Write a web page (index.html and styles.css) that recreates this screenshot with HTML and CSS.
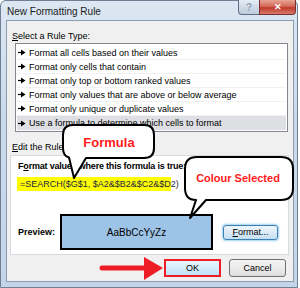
FILE: index.html
```html
<!DOCTYPE html>
<html>
<head>
<meta charset="utf-8">
<link rel="stylesheet" href="styles.css">
</head>
<body>
<div class="window">
  <div class="titlebar">
    <span class="title">New Formatting Rule</span>
    <div class="caption">
      <div class="cbtn help">?</div>
      <div class="cbtn close">&#x2715;</div>
    </div>
  </div>
  <div class="client">
    <div class="label"><u>S</u>elect a Rule Type:</div>
    <div class="list">
      <div class="row"><svg class="ar" width="8" height="7" viewBox="0 0 8 7"><path d="M0 3.5H4" stroke="#000" stroke-width="1.2"/><path d="M3 0.5L7.5 3.5L3 6.5Z" fill="#000"/></svg>Format all cells based on their values</div>
      <div class="row"><svg class="ar" width="8" height="7" viewBox="0 0 8 7"><path d="M0 3.5H4" stroke="#000" stroke-width="1.2"/><path d="M3 0.5L7.5 3.5L3 6.5Z" fill="#000"/></svg>Format only cells that contain</div>
      <div class="row"><svg class="ar" width="8" height="7" viewBox="0 0 8 7"><path d="M0 3.5H4" stroke="#000" stroke-width="1.2"/><path d="M3 0.5L7.5 3.5L3 6.5Z" fill="#000"/></svg>Format only top or bottom ranked values</div>
      <div class="row"><svg class="ar" width="8" height="7" viewBox="0 0 8 7"><path d="M0 3.5H4" stroke="#000" stroke-width="1.2"/><path d="M3 0.5L7.5 3.5L3 6.5Z" fill="#000"/></svg>Format only values that are above or below average</div>
      <div class="row"><svg class="ar" width="8" height="7" viewBox="0 0 8 7"><path d="M0 3.5H4" stroke="#000" stroke-width="1.2"/><path d="M3 0.5L7.5 3.5L3 6.5Z" fill="#000"/></svg>Format only unique or duplicate values</div>
      <div class="row sel"><svg class="ar" width="8" height="7" viewBox="0 0 8 7"><path d="M0 3.5H4" stroke="#000" stroke-width="1.2"/><path d="M3 0.5L7.5 3.5L3 6.5Z" fill="#000"/></svg>Use a formula to determine which cells to format</div>
    </div>
    <div class="label label2"><u>E</u>dit the Rule Description:</div>
    <div class="panel">
      <div class="blabel">F<u>o</u>rmat values where this formula is true:</div>
      <div class="formula">=SEARCH($G$1, $A2&amp;$B2&amp;$C2&amp;$D2)</div>
      <div class="prow">
        <span class="plabel">Preview:</span>
        <div class="preview">AaBbCcYyZz</div>
        <div class="btn fmt"><u>F</u>ormat...</div>
      </div>
    </div>
    <div class="actions">
      <div class="btn ok">OK</div>
      <div class="btn cancel">Cancel</div>
    </div>
  </div>
  <svg class="overlay" width="300" height="288" viewBox="0 0 300 288">
    <path d="M73 125H144Q154 125 154 135V148Q154 158 144 158H86L74 178L69 157.5Q63 156 63 148V135Q63 125 73 125Z" fill="#fff" stroke="#000" stroke-width="2" stroke-linejoin="round"/>
    <text x="109" y="147" text-anchor="middle" class="ctext big">Formula</text>
    <path d="M197 157H281Q293 157 293 169V188Q293 200 281 200H206L190 218L196 200Q185 200 185 188V169Q185 157 197 157Z" fill="#fff" stroke="#000" stroke-width="2" stroke-linejoin="round"/>
    <text x="238" y="182" text-anchor="middle" class="ctext small">Colour Selected</text>
    <path d="M102 268H147" stroke="#ee1c24" stroke-width="5" stroke-linecap="round"/>
    <path d="M144 257L163 268L144 280Z" fill="#ee1c24"/>
  </svg>
</div>
</body>
</html>
```
FILE: styles.css
```css
html, body {
  margin: 0;
  padding: 0;
  background: #ffffff;
}
body {
  font-family: "Liberation Sans", Arial, sans-serif;
  font-size: 9px;
  color: #000;
}
.window {
  position: relative;
  width: 298px;
  height: 288px;
  box-sizing: border-box;
  border: 1px solid #6f8094;
  border-radius: 6px 6px 0 0;
  background: linear-gradient(180deg, #dce7f3 0%, #cbdaeb 40%, #c4d5e9 100%);
  display: flex;
  flex-direction: column;
}
.titlebar {
  height: 19px;
  display: flex;
  align-items: flex-start;
  padding: 0 1px 0 6px;
}
.title {
  font-size: 10px;
  color: #1a1a1a;
  margin-top: 5px;
}
.caption {
  margin-left: auto;
  margin-top: -1px;
  display: flex;
}
.cbtn {
  height: 15px;
  box-sizing: border-box;
  border: 1px solid #5d6e84;
  border-top: none;
  display: flex;
  align-items: center;
  justify-content: center;
  color: #fff;
  font-weight: bold;
}
.help {
  width: 21px;
  border-radius: 0 0 0 4px;
  border-right: none;
  background: linear-gradient(180deg, #e6eef7 0%, #cfdbe8 50%, #bccbdd 100%);
  color: #8a99aa;
  font-size: 10px;
  text-shadow: 0 0 1px #fff;
}
.close {
  width: 37px;
  border-radius: 0 0 4px 0;
  border-color: #7a3030;
  background: linear-gradient(180deg, #e8a493 0%, #d3685a 45%, #c0392b 55%, #d77c6c 100%);
  font-size: 9px;
}
.client {
  margin: 0 3px 5px 5px;
  height: 262px;
  box-sizing: border-box;
  background: #f0f0f0;
  border: 1px solid #8c9cb0;
  display: flex;
  flex-direction: column;
  padding: 0 7px 0 0;
}
.label {
  margin: 9px 0 0 5px;
  height: 12px;
  line-height: 12px;
}
.label2 {
  margin-top: 9px;
}
.list {
  margin: 1px 0 0 8px;
  width: 273px;
  height: 89px;
  box-sizing: border-box;
  border: 1px solid #828790;
  background: #fff;
  padding: 2px 1px 1px 1px;
}
.row {
  height: 14px;
  line-height: 14px;
  display: flex;
  align-items: center;
  padding-left: 1px;
  box-sizing: border-box;
  border-bottom: 1px solid #f1f1f1;
  white-space: nowrap;
}
.row.sel {
  background: #dedfe3;
  border-bottom: none;
}
.ar {
  margin-right: 3px;
  flex: none;
}
.panel {
  margin: 2px 0 0 3px;
  width: 279px;
  height: 100px;
  box-sizing: border-box;
  background: #fff;
  border: 1px solid #d5dbe2;
  display: flex;
  flex-direction: column;
}
.blabel {
  font-weight: bold;
  margin: 4px 0 0 7px;
  height: 12px;
  line-height: 12px;
  letter-spacing: -0.2px;
}
.formula {
  margin: 5px 0 0 6px;
  width: 154px;
  height: 14px;
  line-height: 14px;
  background: #ffff00;
  padding-left: 3px;
  box-sizing: border-box;
  color: #1d1d40;
  white-space: nowrap;
}
.prow {
  margin-top: 23px;
  display: flex;
  align-items: center;
}
.plabel {
  font-weight: bold;
  padding-left: 7px;
  box-sizing: border-box;
  flex: none;
  width: 49px;
}
.preview {
  width: 153px;
  height: 36px;
  box-sizing: border-box;
  border: 2px solid #000;
  background: #9dc3e6;
  display: flex;
  align-items: center;
  justify-content: center;
  font-size: 10px;
}
.btn {
  box-sizing: border-box;
  display: flex;
  align-items: center;
  justify-content: center;
  border-radius: 3px;
}
.fmt {
  margin-left: 10px;
  width: 55px;
  height: 15px;
  border: 1px solid #3c7fb1;
  background: linear-gradient(180deg, #eef6fc 0%, #dbeaf6 50%, #c4dff2 100%);
  box-shadow: 0 0 2px 1px #9fd0f0;
}
.actions {
  margin-top: 4px;
  display: flex;
  justify-content: flex-end;
  gap: 8px;
}
.ok {
  width: 57px;
  height: 18px;
  border: 2px solid #ee1c24;
  border-radius: 0;
  background: linear-gradient(180deg, #e9f5fd 0%, #d5ecfb 50%, #bfe2f8 100%);
}
.cancel {
  width: 57px;
  height: 18px;
  border: 1px solid #707070;
  background: linear-gradient(180deg, #f3f3f3 0%, #ebebeb 50%, #dcdcdc 100%);
}
.overlay {
  position: absolute;
  left: -1px;
  top: -1px;
}
.ctext {
  fill: #ff1a1a;
  font-family: "Liberation Sans", Arial, sans-serif;
  font-weight: bold;
}
.big {
  font-size: 13px;
}
.small {
  font-size: 11px;
}
```
